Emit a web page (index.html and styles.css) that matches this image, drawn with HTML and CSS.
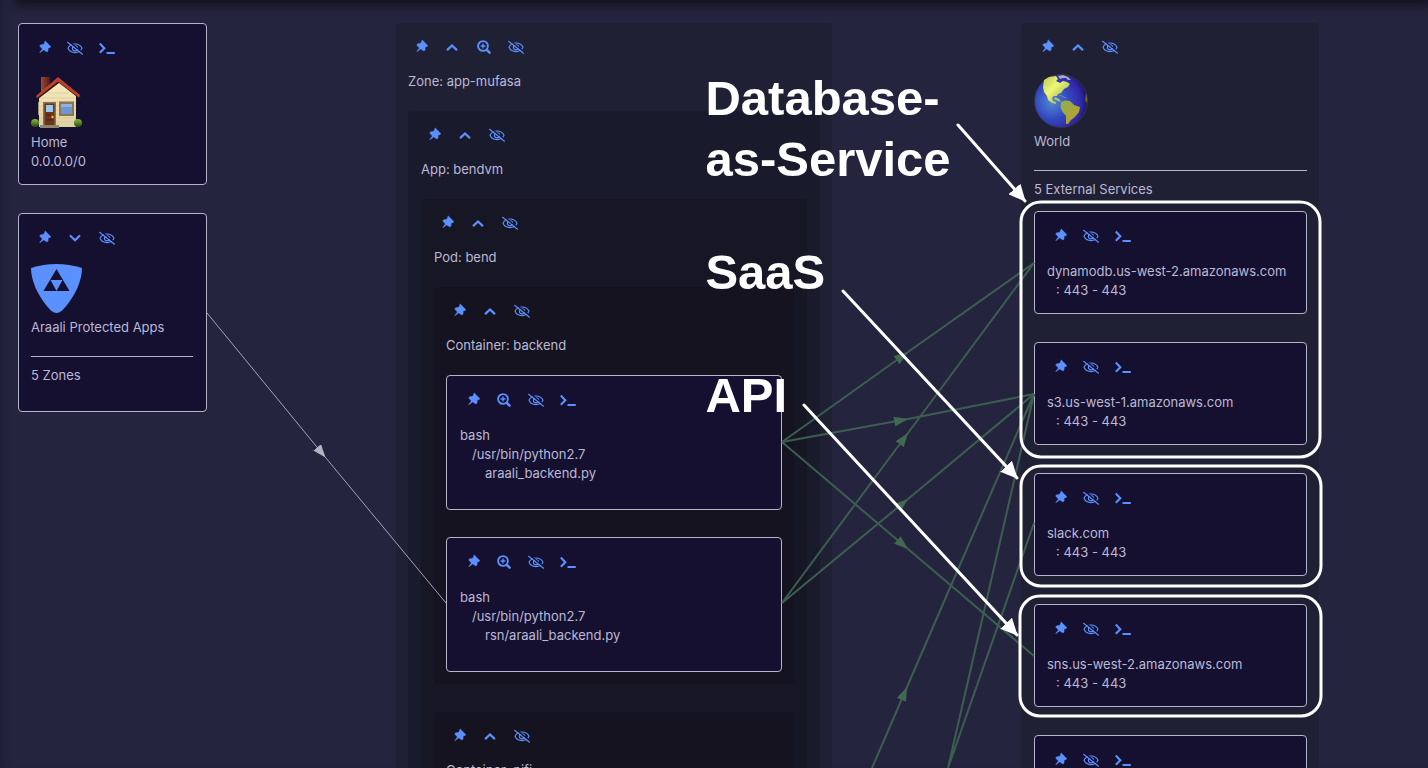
FILE: index.html
```html
<!DOCTYPE html>
<html lang="en">
<head>
<meta charset="utf-8">
<title>Service map</title>
<link rel="stylesheet" href="styles.css">
</head>
<body>
<svg class="defs" aria-hidden="true">
  <mask id="slash-gap" maskUnits="userSpaceOnUse" x="0" y="0" width="16" height="16"><path d="M0 0h16v16H0Z" fill="#fff"/><path d="M1.600 1.300 16 12.900" stroke="#000" stroke-width="1.300"/></mask>
  <symbol id="pin" viewBox="0 0 12 16"><path fill="currentColor" stroke="currentColor" stroke-width=".3" stroke-linejoin="round" d="M6.100.8 12 6.700l-1.200 1-1.500.2-.2 3.300-1.300.9L4.700 10 1 12.800l-.4-.4L3.300 9 .6 6l1-1.300 3-.4.8-1.300Z"/></symbol>
  <symbol id="up" viewBox="0 0 16 16"><path d="M3.600 10.600 8 6.400l4.400 4.200" fill="none" stroke="currentColor" stroke-width="2.200" stroke-linecap="round"/></symbol>
  <symbol id="down" viewBox="0 0 16 16"><path d="M3.600 6 8 10.200 12.400 6" fill="none" stroke="currentColor" stroke-width="2.200" stroke-linecap="round"/></symbol>
  <symbol id="hide" viewBox="0 0 16 16"><g fill="none" stroke="currentColor" stroke-width="1.100" stroke-linecap="round"><g mask="url(#slash-gap)"><path d="M1 8.300C2.300 5.300 4.900 4 8 4s5.700 1.300 7 4.300c-1.300 3-3.900 4.300-7 4.300S2.300 11.300 1 8.300Z"/><circle cx="8" cy="8.300" r="2.600"/></g><path d="M.6 2.300 15.500 14.200"/></g></symbol>
  <symbol id="zoom" viewBox="0 0 16 16"><g fill="none" stroke="currentColor"><circle cx="7" cy="7" r="4.900" stroke-width="1.900"/><path d="M7 4.600v4.800M4.600 7h4.800" stroke-width="1.400"/><path d="m10.800 10.800 2.800 2.800" stroke-width="2.500" stroke-linecap="round"/></g></symbol>
  <symbol id="term" viewBox="0 0 16 16"><path d="M.8 3.600 5.300 8.200.8 12.800M7.500 13H15.800" fill="none" stroke="currentColor" stroke-width="2.100"/></symbol>
</svg>

<main class="canvas">
  <section class="column">
    <article class="card">
      <div class="tools">
        <button class="tool pin" aria-label="Pin"><svg><use href="#pin"/></svg></button>
        <button class="tool" aria-label="Hide"><svg><use href="#hide"/></svg></button>
        <button class="tool" aria-label="Terminal"><svg><use href="#term"/></svg></button>
      </div>
      <div class="figure figure-home">
        <svg width="52" height="52" viewBox="0 0 52 52" role="img" aria-label="House">
          <defs>
            <linearGradient id="wall" x2="0" y2="1"><stop stop-color="#fbebbb"/><stop offset="1" stop-color="#ded1a3"/></linearGradient>
            <linearGradient id="brick" x2="1"><stop stop-color="#a54730"/><stop offset="1" stop-color="#4e1d18"/></linearGradient>
            <linearGradient id="bush" x2="0" y2="1"><stop stop-color="#86b83a"/><stop offset="1" stop-color="#29480f"/></linearGradient>
          </defs>
          <path d="M10 1h9v14l-9 8Z" fill="url(#brick)"/>
          <path d="M7 26h38v13H7Z" fill="#a3946c"/>
          <path d="M8 20 27 5l18 15v31H8Z" fill="url(#wall)"/>
          <path d="M8 22h37M8 26h37M8 30h37M8 34h37M8 38h37M8 42h37M8 46h37M16 17h22" stroke="#d3c497" stroke-width=".6"/>
          <path d="M28 3 50 20l-1 3-21-16L7 23l1-4Z" fill="#301713"/>
          <path d="M5 20 27 1l22 18-1 2.500L27 5.500 6 22Z" fill="#bc412d"/>
          <circle cx="4" cy="47" r="4" fill="url(#bush)"/><circle cx="47" cy="47" r="4" fill="url(#bush)"/>
          <path d="M12 26h13v24H12Z" fill="#89744f"/><path d="M13.500 27.500h10V49h-10Z" fill="#6a351c"/>
          <path d="M15 29h7v7h-7Z" fill="#9dc8ed"/><path d="M15.500 39h4M15.500 44h6" stroke="#482010"/>
          <circle cx="21.500" cy="41" r="1.200" fill="#f2be3f"/>
          <path d="M28 25.500h15V40H28Z" fill="#8b7654"/><path d="M30 28h11v10H30Z" fill="#6f96d3"/><path d="M30 28h11v3H30Z" fill="#8fb2e6"/>
          <path d="M9 49h19v3H9Z" fill="#8d856f"/>
        </svg>
      </div>
      <p class="line">Home</p>
      <p class="line">0.0.0.0/0</p>
    </article>
    <article class="card card-tall">
      <div class="tools">
        <button class="tool pin" aria-label="Pin"><svg><use href="#pin"/></svg></button>
        <button class="tool" aria-label="Expand"><svg><use href="#down"/></svg></button>
        <button class="tool" aria-label="Hide"><svg><use href="#hide"/></svg></button>
      </div>
      <div class="figure figure-shield">
        <svg width="52" height="50" viewBox="0 0 52 50" role="img" aria-label="Shield">
          <path d="M0 4Q25-4 51 4C51 17 44 31 36 41c-4 5-7 8-10.500 8S19 46 15 41C7 31 0 17 0 4Z" fill="#5b90ff"/>
          <path d="M25.500 5 38.500 27h-26Z" fill="#151030"/><path d="M19.500 16h12l-6 11Z" fill="#5b90ff"/>
        </svg>
      </div>
      <p class="line">Araali Protected Apps</p>
      <hr class="rule">
      <p class="line">5 Zones</p>
    </article>
  </section>

  <section class="column">
    <div class="group zone">
      <div class="tools">
        <button class="tool pin" aria-label="Pin"><svg><use href="#pin"/></svg></button>
        <button class="tool" aria-label="Collapse"><svg><use href="#up"/></svg></button>
        <button class="tool" aria-label="Zoom in"><svg><use href="#zoom"/></svg></button>
        <button class="tool" aria-label="Hide"><svg><use href="#hide"/></svg></button>
      </div>
      <p class="line title">Zone: app-mufasa</p>
      <div class="group app">
        <div class="tools">
          <button class="tool pin" aria-label="Pin"><svg><use href="#pin"/></svg></button>
          <button class="tool" aria-label="Collapse"><svg><use href="#up"/></svg></button>
          <button class="tool" aria-label="Hide"><svg><use href="#hide"/></svg></button>
        </div>
        <p class="line title">App: bendvm</p>
        <div class="group pod">
          <div class="tools">
            <button class="tool pin" aria-label="Pin"><svg><use href="#pin"/></svg></button>
            <button class="tool" aria-label="Collapse"><svg><use href="#up"/></svg></button>
            <button class="tool" aria-label="Hide"><svg><use href="#hide"/></svg></button>
          </div>
          <p class="line title">Pod: bend</p>
          <div class="group container">
            <div class="tools">
              <button class="tool pin" aria-label="Pin"><svg><use href="#pin"/></svg></button>
              <button class="tool" aria-label="Collapse"><svg><use href="#up"/></svg></button>
              <button class="tool" aria-label="Hide"><svg><use href="#hide"/></svg></button>
            </div>
            <p class="line title">Container: backend</p>
            <article class="card process">
              <div class="tools">
                <button class="tool pin" aria-label="Pin"><svg><use href="#pin"/></svg></button>
                <button class="tool" aria-label="Zoom in"><svg><use href="#zoom"/></svg></button>
                <button class="tool" aria-label="Hide"><svg><use href="#hide"/></svg></button>
                <button class="tool" aria-label="Terminal"><svg><use href="#term"/></svg></button>
              </div>
              <p class="line">bash</p>
              <p class="line indent-1">/usr/bin/python2.7</p>
              <p class="line indent-2">araali_backend.py</p>
            </article>
            <article class="card process">
              <div class="tools">
                <button class="tool pin" aria-label="Pin"><svg><use href="#pin"/></svg></button>
                <button class="tool" aria-label="Zoom in"><svg><use href="#zoom"/></svg></button>
                <button class="tool" aria-label="Hide"><svg><use href="#hide"/></svg></button>
                <button class="tool" aria-label="Terminal"><svg><use href="#term"/></svg></button>
              </div>
              <p class="line">bash</p>
              <p class="line indent-1">/usr/bin/python2.7</p>
              <p class="line indent-2">rsn/araali_backend.py</p>
            </article>
          </div>
          <div class="group container">
            <div class="tools">
              <button class="tool pin" aria-label="Pin"><svg><use href="#pin"/></svg></button>
              <button class="tool" aria-label="Collapse"><svg><use href="#up"/></svg></button>
              <button class="tool" aria-label="Hide"><svg><use href="#hide"/></svg></button>
            </div>
            <p class="line title">Container: nifi</p>
          </div>
        </div>
      </div>
    </div>
  </section>

  <section class="column">
    <div class="group world">
      <div class="tools">
        <button class="tool pin" aria-label="Pin"><svg><use href="#pin"/></svg></button>
        <button class="tool" aria-label="Collapse"><svg><use href="#up"/></svg></button>
        <button class="tool" aria-label="Hide"><svg><use href="#hide"/></svg></button>
      </div>
      <div class="figure figure-world">
        <svg width="54" height="54" viewBox="0 0 54 54" role="img" aria-label="Globe">
          <defs>
            <radialGradient id="sea" cx=".33" cy=".52" r=".66"><stop stop-color="#5288d4"/><stop offset=".5" stop-color="#3347c0"/><stop offset=".85" stop-color="#3026a4"/><stop offset="1" stop-color="#1c165e"/></radialGradient>
            <linearGradient id="land" x2="1" y2="1"><stop stop-color="#b9c84e"/><stop offset=".4" stop-color="#eef777"/><stop offset="1" stop-color="#839a3a"/></linearGradient>
            <linearGradient id="south" x2="1" y2="1"><stop stop-color="#8fb04e"/><stop offset="1" stop-color="#c29a25"/></linearGradient>
          </defs>
          <circle cx="27" cy="27" r="26.500" fill="url(#sea)" stroke="#33334b"/>
          <path d="M10 6 15 3l7-1 2 3-2 2 4 2 3-2 4 1 3 2-2 3-4 2-3 4-3 1-1 2-3 0-2 2 1 3 3 1 0 2-4-1-4-3-1-4-3-4-1-5Z" fill="url(#land)"/>
          <path d="M24 2 29 1l5 2 3 3-3 0-2-2-3 0-3 1Z" fill="#a3aebb"/>
          <path d="M21 23 25 25 27 28 24 27 20 25Z" fill="#b3c46b"/>
          <path d="M27 28 31 26.500l5 .5 4 4 6 2-1 5-4 5-4 3-3 4-2 0 0-8-4-5-1.500-4Z" fill="url(#south)"/>
          <path d="M52 19q2 5 1 10l-2-3Z" fill="#696721"/>
          <path d="m25 21 3 1 4 2" fill="none" stroke="#6d8fa0"/>
        </svg>
      </div>
      <p class="line">World</p>
      <hr class="rule">
      <p class="line">5 External Services</p>
      <div class="services">
        <article class="card">
          <div class="tools">
            <button class="tool pin" aria-label="Pin"><svg><use href="#pin"/></svg></button>
            <button class="tool" aria-label="Hide"><svg><use href="#hide"/></svg></button>
            <button class="tool" aria-label="Terminal"><svg><use href="#term"/></svg></button>
          </div>
          <p class="line host">dynamodb.us-west-2.amazonaws.com</p>
          <p class="line port">: 443 - 443</p>
        </article>
        <article class="card">
          <div class="tools">
            <button class="tool pin" aria-label="Pin"><svg><use href="#pin"/></svg></button>
            <button class="tool" aria-label="Hide"><svg><use href="#hide"/></svg></button>
            <button class="tool" aria-label="Terminal"><svg><use href="#term"/></svg></button>
          </div>
          <p class="line host">s3.us-west-1.amazonaws.com</p>
          <p class="line port">: 443 - 443</p>
        </article>
        <article class="card">
          <div class="tools">
            <button class="tool pin" aria-label="Pin"><svg><use href="#pin"/></svg></button>
            <button class="tool" aria-label="Hide"><svg><use href="#hide"/></svg></button>
            <button class="tool" aria-label="Terminal"><svg><use href="#term"/></svg></button>
          </div>
          <p class="line host">slack.com</p>
          <p class="line port">: 443 - 443</p>
        </article>
        <article class="card">
          <div class="tools">
            <button class="tool pin" aria-label="Pin"><svg><use href="#pin"/></svg></button>
            <button class="tool" aria-label="Hide"><svg><use href="#hide"/></svg></button>
            <button class="tool" aria-label="Terminal"><svg><use href="#term"/></svg></button>
          </div>
          <p class="line host">sns.us-west-2.amazonaws.com</p>
          <p class="line port">: 443 - 443</p>
        </article>
        <article class="card">
          <div class="tools">
            <button class="tool pin" aria-label="Pin"><svg><use href="#pin"/></svg></button>
            <button class="tool" aria-label="Hide"><svg><use href="#hide"/></svg></button>
            <button class="tool" aria-label="Terminal"><svg><use href="#term"/></svg></button>
          </div>
        </article>
      </div>
    </div>
  </section>

  <svg class="links" viewBox="0 0 1428 768" preserveAspectRatio="none" aria-hidden="true">
    <defs>
      <marker id="flow" markerUnits="userSpaceOnUse" markerWidth="14" markerHeight="10" refX="14" refY="5" orient="auto"><path d="M0 0 14 5 0 10Z" fill="#40694f"/></marker>
      <marker id="flow-light" markerUnits="userSpaceOnUse" markerWidth="13" markerHeight="10" refX="6" refY="5" orient="auto"><path d="M0 0 13 5 0 10Z" fill="#b3b1c2"/></marker>
      <marker id="head" markerUnits="userSpaceOnUse" markerWidth="17" markerHeight="16" refX="16" refY="8" orient="auto"><path d="M0 0 17 8 0 16Z" fill="#fff"/></marker>
    </defs>
    <polyline class="link-light" points="207,313 321,452 446,603"/>
    <g class="link">
      <polyline points="782,442 908,352 1034,263"/>
      <polyline points="782,442 908,419 1034,394"/>
      <polyline points="782,442 908,549 1034,656"/>
      <polyline points="782,603 908,433 1034,263"/>
      <polyline points="782,603 908,499 1034,394"/>
      <polyline points="872,768 907,687 1034,394"/>
      <path d="M948 768 1034 394M948 768 1034 523"/>
    </g>
    <g class="callout">
      <rect x="1021" y="202" width="299" height="255" rx="20"/>
      <rect x="1021" y="466" width="300" height="120" rx="20"/>
      <rect x="1020" y="596" width="301" height="120" rx="20"/>
    </g>
    <g class="pointer">
      <path d="M958 125 1025 201"/>
      <path d="M843 291 1017 478"/>
      <path d="M804 405 1017 635"/>
    </g>
  </svg>
  <p class="note note-database">Database-<br>as-Service</p>
  <p class="note note-saas">SaaS</p>
  <p class="note note-api">API</p>
</main>
</body>
</html>
```
FILE: styles.css
```css
* {
  box-sizing: border-box;
}

body {
  margin: 0;
  background: #25243f;
  color: #bbb9d5;
  font-family: Inter, "Noto Sans", sans-serif;
  font-size: 13px;
  line-height: 19px;
}

.defs {
  position: absolute;
  width: 0;
  height: 0;
}

.canvas {
  position: relative;
  display: grid;
  grid-template-columns: 189fr 436fr 298fr;
  gap: 189px;
  height: 100vh;
  padding: 23px 109px 0 18px;
  overflow: hidden;
  box-shadow: inset 10px 0 10px -8px #1c1b30;
}

.canvas::before {
  content: "";
  position: absolute;
  top: -8px;
  right: 0;
  left: 18px;
  height: 8px;
  box-shadow: 0 2px 10px 3px #12111f;
}

.column {
  min-width: 0;
}

.card {
  padding: 12px 13px 13px 12px;
  border: 1px solid #b5b4c8;
  border-radius: 4px;
  background: #151030;
}

.column > .card + .card {
  margin-top: 28px;
}

.column > .card-tall {
  padding-bottom: 26px;
}

.tools {
  display: flex;
  gap: 16px;
  align-items: center;
  height: 24px;
  padding-left: 8px;
}

.tool {
  width: 16px;
  height: 16px;
  padding: 0;
  border: 0;
  background: none;
  color: #5b90ff;
  cursor: pointer;
}

.tool.pin {
  width: 12px;
}

.tool svg {
  display: block;
  width: 100%;
  height: 100%;
}

.line {
  margin: 0;
  white-space: nowrap;
}

.figure svg {
  display: block;
}

.figure-home {
  height: 73px;
  padding-top: 16px;
}

.figure-shield {
  height: 68px;
  padding-top: 14px;
}

.figure-world {
  height: 73px;
  padding-top: 15px;
}

.rule {
  height: 1px;
  margin: 19px 0 9px;
  border: 0;
  background: #b5b4c8;
}

.group {
  padding: 12px;
  border-radius: 4px;
}

.zone,
.world {
  min-height: 100vh;
  background: #202035;
}

.app {
  padding: 12px 13px;
  background: #1a1a2d;
}

.pod {
  padding: 12px 13px;
  background: #171624;
}

.container {
  background: #14131f;
}

.container + .container {
  margin-top: 28px;
}

.group > .title {
  margin: 13px 0 20px;
}

.process {
  padding: 12px 13px 26px;
}

.process .tools,
.services .tools {
  margin-bottom: 14px;
}

.process + .process {
  margin-top: 27px;
}

.indent-1 {
  padding-left: 12px;
}

.indent-2 {
  padding-left: 25px;
}

.world {
  padding: 12px 12px 12px 13px;
}

.services {
  display: grid;
  gap: 28px;
  margin-top: 12px;
}

.port {
  padding-left: 9px;
}

.links {
  position: absolute;
  top: 0;
  left: 0;
  width: 100%;
  height: 768px;
  pointer-events: none;
}

.link {
  fill: none;
  stroke: #3b5f4f;
  stroke-width: 2;
}

.link polyline {
  marker-mid: url(#flow);
}

.link-light {
  fill: none;
  stroke: #a3a1b5;
  stroke-width: 1;
  marker-mid: url(#flow-light);
}

.callout {
  fill: none;
  stroke: #fff;
  stroke-width: 3;
}

.pointer {
  fill: none;
  stroke: #fff;
  stroke-width: 3;
  stroke-linecap: round;
}

.pointer path {
  marker-end: url(#head);
}

.note {
  position: absolute;
  left: 49.4%;
  margin: 0;
  color: #fff;
  font: bold 49px/61px "Liberation Sans", Arial, sans-serif;
}

.note-database {
  top: 68px;
}

.note-saas {
  top: 242px;
}

.note-api {
  top: 365px;
}
```
